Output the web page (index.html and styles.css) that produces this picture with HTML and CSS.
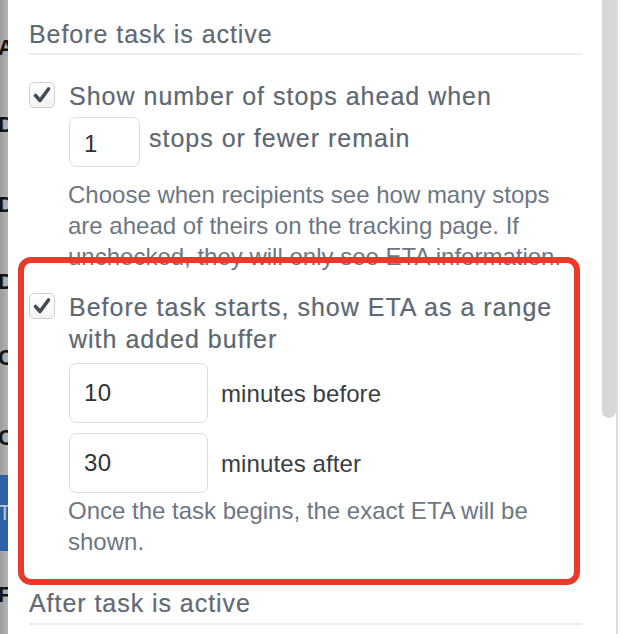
FILE: index.html
```html
<!DOCTYPE html>
<html>
<head>
<meta charset="utf-8">
<link rel="stylesheet" href="styles.css">
</head>
<body>
<div class="app">
  <aside class="behind">
    <div class="behind-item b-a">A</div>
    <div class="behind-item b-d1">D</div>
    <div class="behind-item b-d2">D</div>
    <div class="behind-item b-d3">D</div>
    <div class="behind-item b-c1">C</div>
    <div class="behind-item b-c2">C</div>
    <div class="behind-band"><span>T</span></div>
    <div class="behind-item b-f">F</div>
  </aside>

  <main class="panel">
    <h2 class="section-title first">Before task is active</h2>

    <div class="option opt-1">
      <span class="checkbox"><svg viewBox="0 0 26 26" width="26" height="26"><path d="M6.5 13.5 L11 18.5 L19.5 7" fill="none" stroke="#434d57" stroke-width="3.6" stroke-linecap="round" stroke-linejoin="round"/></svg></span>
      <div class="option-body">
        <div class="label">Show number of stops ahead when</div>
        <div class="inline-row row-small">
          <div class="field field-small">1</div>
          <span class="label">stops or fewer remain</span>
        </div>
        <p class="help help-1">Choose when recipients see how many stops are ahead of theirs on the tracking page. If unchecked, they will only see ETA information.</p>
      </div>
    </div>

    <div class="option opt-2">
      <span class="checkbox"><svg viewBox="0 0 26 26" width="26" height="26"><path d="M6.5 13.5 L11 18.5 L19.5 7" fill="none" stroke="#434d57" stroke-width="3.6" stroke-linecap="round" stroke-linejoin="round"/></svg></span>
      <div class="option-body">
        <div class="label">Before task starts, show ETA as a range with added buffer</div>
        <div class="fields">
          <div class="inline-row">
            <div class="field">10</div>
            <span class="unit">minutes before</span>
          </div>
          <div class="inline-row">
            <div class="field">30</div>
            <span class="unit">minutes after</span>
          </div>
        </div>
        <p class="help help-2">Once the task begins, the exact ETA will be shown.</p>
      </div>
    </div>

    <h2 class="section-title second">After task is active</h2>
  </main>

  <div class="scrollbar"><div class="thumb"></div></div>
  <div class="edge"></div>

  <div class="highlight"></div>
</div>
</body>
</html>
```

FILE: styles.css
```css
* { box-sizing: border-box; }
html, body { margin: 0; padding: 0; background: #ffffff; }
body { font-family: "Liberation Sans", Arial, sans-serif; }

.app {
  position: relative;
  display: flex;
  width: 621px;
  height: 634px;
  overflow: hidden;
}

/* dimmed page content behind the panel */
.behind {
  width: 8px;
  flex: none;
  overflow: hidden;
  background: linear-gradient(to right, #9d9d9d, #b3b3b3);
  display: flex;
  flex-direction: column;
}
.behind-item {
  font-weight: bold;
  font-size: 22px;
  line-height: 20px;
  height: 20px;
  color: #141414;
  margin-left: -2px;
  white-space: nowrap;
}
.b-a { margin-top: 38px; }
.b-d1 { margin-top: 57px; }
.b-d2 { margin-top: 60px; }
.b-d3 { margin-top: 57px; }
.b-c1 { margin-top: 56px; }
.b-c2 { margin-top: 60px; }
.behind-band {
  margin-top: 27px;
  height: 76px;
  background: #2d62a6;
  display: flex;
  align-items: center;
}
.behind-band span {
  font-size: 22px;
  color: #b9c5d6;
  margin-left: -2px;
  white-space: nowrap;
}
.b-f { margin-top: 34px; }

/* panel */
.panel {
  width: 594px;
  flex: none;
  padding: 18px 20px 0 21px;
  color: #5c6772;
}
.section-title {
  margin: 0;
  font-size: 25px;
  font-weight: normal;
  letter-spacing: 0.95px;
  line-height: 32px;
  color: #5f6a75;
  -webkit-text-stroke: 0.2px #5f6a75;
  padding-bottom: 3px;
  border-bottom: 2px solid #ededed;
}
.section-title.second { margin-top: 30px; padding-bottom: 4px; }

.option {
  display: flex;
  gap: 14px;
}
.opt-1 { margin-top: 25px; }
.opt-2 { margin-top: 19px; }

.checkbox {
  flex: none;
  width: 26px;
  height: 26px;
  margin-top: 2px;
  border: 1px solid #cfcfcf;
  border-radius: 5px;
  background: linear-gradient(#ffffff, #f3f3f3);
  display: flex;
  align-items: center;
  justify-content: center;
}
.checkbox svg { display: block; margin: -1px; }

.option-body {
  flex: 1;
  min-width: 0;
}
.label {
  font-size: 25px;
  line-height: 32px;
  letter-spacing: 1px;
  color: #5d6873;
  -webkit-text-stroke: 0.2px #5d6873;
}

.inline-row {
  display: flex;
  align-items: center;
  gap: 13px;
}
.row-small {
  margin-top: 5px;
  align-items: flex-start;
  gap: 9px;
}
.row-small .label { margin-top: 5px; }

.field {
  width: 139px;
  height: 60px;
  border: 1.5px solid #dedede;
  border-radius: 7px;
  padding-left: 14px;
  display: flex;
  align-items: center;
  font-size: 24px;
  color: #333333;
  letter-spacing: 0.3px;
}
.field-small {
  width: 71px;
  height: 50px;
  padding-top: 4px;
}

.fields {
  margin-top: 8px;
  display: flex;
  flex-direction: column;
  gap: 10px;
}
.unit {
  font-size: 24px;
  line-height: 31px;
  color: #3a3d41;
  letter-spacing: 0.1px;
}

.help {
  margin: 0;
  font-size: 24px;
  line-height: 31px;
  color: #6c7783;
  margin-left: -1px;
}
.help-1 { margin-top: 12px; }
.help-2 { margin-top: 2px; }

/* scrollbar */
.scrollbar {
  width: 14px;
  flex: none;
  position: relative;
}
.thumb {
  width: 14px;
  height: 418px;
  background: #d6d7d9;
  border-radius: 0 0 7px 7px;
}
.edge {
  width: 2px;
  flex: none;
  background: #dedfe0;
}

/* annotation overlay */
.highlight {
  position: absolute;
  left: 18px;
  top: 257px;
  width: 562px;
  height: 328px;
  border: 6px solid #e8392b;
  border-radius: 13px;
  pointer-events: none;
}
```
